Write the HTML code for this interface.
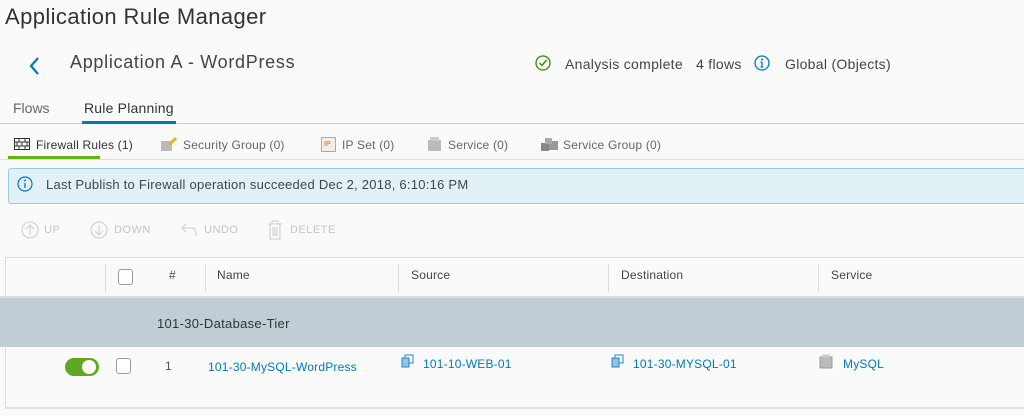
<!DOCTYPE html>
<html><head><style>
*{margin:0;padding:0;box-sizing:border-box}
body{width:1024px;height:416px;overflow:hidden;background:#fafafa;font-family:"Liberation Sans",sans-serif;color:#565656;position:relative}
.a{position:absolute;white-space:nowrap}
.lnk{color:#0079b8;font-size:12px;letter-spacing:.2px}
.cb{position:absolute;width:15px;height:16px;border:1px solid #9a9a9a;border-radius:3px;background:#fff}
.sep{position:absolute;top:264px;width:1px;height:28px;background:#ddd}
.hd{font-size:12px;color:#444;top:268px;letter-spacing:.2px}
.btn{font-size:11px;color:#c4c4c4;top:224px;letter-spacing:.5px}
.st{font-size:12px;color:#666;top:138px;letter-spacing:.2px}
</style></head><body>
<div class="a" style="left:5px;top:4px;font-size:22px;letter-spacing:.4px;color:#333">Application Rule Manager</div>
<svg class="a" style="left:28px;top:56px" width="14" height="20"><path d="M10 2 L3 10 L10 18" stroke="#0079b8" stroke-width="2.2" fill="none"/></svg>
<div class="a" style="left:70px;top:52px;font-size:18px;letter-spacing:.7px;color:#444">Application A - WordPress</div>
<svg class="a" style="left:535px;top:55px" width="16" height="16"><circle cx="8" cy="8" r="7" stroke="#3c8500" stroke-width="1.3" fill="none"/><path d="M4.5 8 L7 10.5 L11.5 5" stroke="#3c8500" stroke-width="1.4" fill="none"/></svg>
<div class="a" style="left:565px;top:56px;font-size:14px;letter-spacing:.3px;color:#444">Analysis complete</div>
<div class="a" style="left:696px;top:56px;font-size:14px;letter-spacing:.3px;color:#444">4 flows</div>
<svg class="a" style="left:754px;top:55px" width="16" height="16"><circle cx="8" cy="8" r="7" stroke="#0079b8" stroke-width="1.3" fill="none"/><path d="M8 7 V12 M6.5 12 H9.5 M6.5 7 H8" stroke="#0079b8" stroke-width="1.3"/><circle cx="8" cy="4.5" r="1" fill="#0079b8"/></svg>
<div class="a" style="left:785px;top:56px;font-size:14px;letter-spacing:.3px;color:#444">Global (Objects)</div>
<div class="a" style="left:13px;top:100px;font-size:14px;color:#666">Flows</div>
<div class="a" style="left:84px;top:100px;font-size:14px;letter-spacing:.2px;color:#333">Rule Planning</div>
<div class="a" style="left:0;top:123px;width:1024px;height:1px;background:#ccc"></div>
<div class="a" style="left:82px;top:121px;width:94px;height:3px;background:#0079b8"></div>
<svg class="a" style="left:14px;top:138px" width="16" height="12"><rect x="0.5" y="0.5" width="15" height="11" fill="none" stroke="#333"/><path d="M0 4H16M0 8H16M5 0V4M11 0V4M3 4V8M8 4V8M13 4V8M5 8V12M11 8V12" stroke="#333"/></svg>
<div class="a st" style="left:36px;color:#333">Firewall Rules (1)</div>
<svg class="a" style="left:160px;top:136px" width="18" height="16"><rect x="1" y="5" width="11" height="10" fill="#bbb"/><path d="M9 9 L16 2" stroke="#e8b020" stroke-width="3"/></svg>
<div class="a st" style="left:183px">Security Group (0)</div>
<svg class="a" style="left:321px;top:137px" width="15" height="15"><rect x="0.5" y="0.5" width="14" height="14" fill="#eee" stroke="#aaa"/><text x="3" y="9" font-size="7" fill="#e06000" font-family="Liberation Sans">IP</text></svg>
<div class="a st" style="left:342px">IP Set (0)</div>
<svg class="a" style="left:427px;top:136px" width="15" height="16"><rect x="1" y="4" width="13" height="11" fill="#bbb"/><rect x="3" y="1" width="9" height="4" fill="#ccc"/></svg>
<div class="a st" style="left:448px">Service (0)</div>
<svg class="a" style="left:541px;top:137px" width="18" height="14"><rect x="0" y="6" width="8" height="8" fill="#888"/><rect x="8" y="4" width="9" height="9" fill="#999"/><rect x="4" y="1" width="7" height="6" fill="#aaa"/></svg>
<div class="a st" style="left:563px">Service Group (0)</div>
<div class="a" style="left:0;top:159px;width:1024px;height:1px;background:#ddd"></div>
<div class="a" style="left:8px;top:156px;width:92px;height:3px;background:#60b515"></div>
<div class="a" style="left:8px;top:168px;width:1020px;height:36px;background:#e1f1f6;border:1px solid #91cde4;border-radius:3px"></div>
<svg class="a" style="left:17px;top:176px" width="16" height="16"><circle cx="8" cy="8" r="7" stroke="#0079b8" stroke-width="1.2" fill="none"/><path d="M8 7 V12" stroke="#0079b8" stroke-width="1.3"/><circle cx="8" cy="4.5" r="1" fill="#0079b8"/></svg>
<div class="a" style="left:46px;top:177px;font-size:13px;letter-spacing:.25px;color:#444">Last Publish to Firewall operation succeeded Dec 2, 2018, 6:10:16 PM</div>
<svg class="a" style="left:21px;top:221px" width="18" height="18"><circle cx="9" cy="9" r="8" stroke="#ccc" fill="none"/><path d="M9 14V4M5 8L9 4L13 8" stroke="#ccc" fill="none"/></svg>
<div class="a btn" style="left:44px">UP</div>
<svg class="a" style="left:90px;top:221px" width="18" height="18"><circle cx="9" cy="9" r="8" stroke="#ccc" fill="none"/><path d="M9 4V14M5 10L9 14L13 10" stroke="#ccc" fill="none"/></svg>
<div class="a btn" style="left:114px">DOWN</div>
<svg class="a" style="left:180px;top:221px" width="18" height="18"><path d="M6 3L2 7L6 11M2 7H12C15 7 16 11 16 15" stroke="#ccc" fill="none"/></svg>
<div class="a btn" style="left:204px">UNDO</div>
<svg class="a" style="left:267px;top:220px" width="16" height="20"><path d="M1 4H15M5 4V1H11V4M3 4V19H13V4M6 7V16M8 7V16M10 7V16" stroke="#ccc" fill="none"/></svg>
<div class="a btn" style="left:290px">DELETE</div>
<div class="a" style="left:5px;top:257px;width:1019px;height:152px;background:#fafafa;border-top:1px solid #ddd;border-left:1px solid #ddd;border-bottom:2px solid #e0e0e0"></div>
<div class="sep" style="left:105px"></div><div class="sep" style="left:205px"></div><div class="sep" style="left:398px"></div><div class="sep" style="left:608px"></div><div class="sep" style="left:818px"></div>
<div class="cb" style="left:118px;top:269px"></div>
<div class="a hd" style="left:169px">#</div>
<div class="a hd" style="left:217px">Name</div>
<div class="a hd" style="left:411px">Source</div>
<div class="a hd" style="left:621px">Destination</div>
<div class="a hd" style="left:831px">Service</div>
<div class="a" style="left:0;top:296px;width:1024px;height:2px;background:#ddd"></div>
<div class="a" style="left:0;top:298px;width:1024px;height:49px;background:#c1cdd4"></div>
<div class="a" style="left:157px;top:316px;font-size:13px;letter-spacing:.3px;color:#333">101-30-Database-Tier</div>
<div class="a" style="left:65px;top:358px;width:34px;height:18px;border-radius:9px;background:#60a820"></div>
<div class="a" style="left:82px;top:360px;width:14px;height:14px;border-radius:7px;background:#fff"></div>
<div class="cb" style="left:116px;top:358px"></div>
<div class="a" style="left:165px;top:359px;font-size:12px;color:#555">1</div>
<div class="a lnk" style="left:208px;top:360px">101-30-MySQL-WordPress</div>
<svg class="a" style="left:401px;top:354px" width="13" height="14"><rect x="4" y="1" width="8" height="8" fill="none" stroke="#2a82c8"/><rect x="1" y="4" width="7" height="9" fill="#8ec3ea" stroke="#2a82c8"/></svg>
<div class="a lnk" style="left:423px;top:357px">101-10-WEB-01</div>
<svg class="a" style="left:611px;top:354px" width="13" height="14"><rect x="4" y="1" width="8" height="8" fill="none" stroke="#2a82c8"/><rect x="1" y="4" width="7" height="9" fill="#8ec3ea" stroke="#2a82c8"/></svg>
<div class="a lnk" style="left:633px;top:357px">101-30-MYSQL-01</div>
<svg class="a" style="left:819px;top:354px" width="14" height="15"><rect x="1" y="3" width="12" height="11" fill="#bbb" stroke="#999"/><rect x="3" y="0.5" width="8" height="3" fill="#ccc"/></svg>
<div class="a lnk" style="left:843px;top:357px">MySQL</div>
</body></html>
